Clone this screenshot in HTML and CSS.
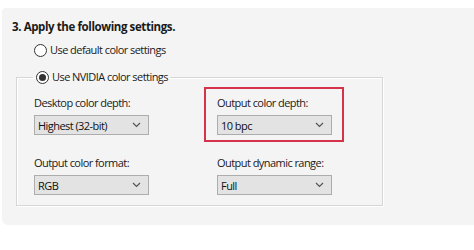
FILE: index.html
```html
<!DOCTYPE html>
<html lang="en">
<head>
<meta charset="UTF-8">
<meta name="viewport" content="width=device-width, initial-scale=1.0">
<title>Change resolution</title>
<link rel="stylesheet" href="styles.css">
</head>
<body>
<div class="panel">
  <div class="step-title">3. Apply the following settings.</div>

  <div class="radio-row">
    <span class="radio"></span>
    <span>Use default color settings</span>
  </div>

  <fieldset class="group">
    <legend class="radio-row">
      <span class="radio checked"></span>
      <span>Use NVIDIA color settings</span>
    </legend>

    <div class="grid">
      <div class="cell">
        <div class="label">Desktop color depth:</div>
        <div class="combo"><span>Highest (32-bit)</span><svg width="9" height="6" viewBox="0 0 9 6"><polyline points="1,1 4.5,4.5 8,1" fill="none" stroke="#555" stroke-width="1.2"/></svg></div>
      </div>
      <div class="cell highlight">
        <div class="label">Output color depth:</div>
        <div class="combo"><span>10 bpc</span><svg width="9" height="6" viewBox="0 0 9 6"><polyline points="1,1 4.5,4.5 8,1" fill="none" stroke="#555" stroke-width="1.2"/></svg></div>
      </div>
      <div class="cell">
        <div class="label">Output color format:</div>
        <div class="combo"><span>RGB</span><svg width="9" height="6" viewBox="0 0 9 6"><polyline points="1,1 4.5,4.5 8,1" fill="none" stroke="#555" stroke-width="1.2"/></svg></div>
      </div>
      <div class="cell">
        <div class="label">Output dynamic range:</div>
        <div class="combo"><span>Full</span><svg width="9" height="6" viewBox="0 0 9 6"><polyline points="1,1 4.5,4.5 8,1" fill="none" stroke="#555" stroke-width="1.2"/></svg></div>
      </div>
    </div>
  </fieldset>
</div>
</body>
</html>
```

FILE: styles.css
```css
body {
  margin: 0;
  background-color: #ffffff;
  font-family: "Open Sans", "Noto Sans", sans-serif;
  font-size: 11px;
  letter-spacing: -0.55px;
  color: #1a1a1a;
  white-space: nowrap;
}

.panel {
  margin: 8px 0 0 2px;
  height: 206px;
  padding: 11px 0 0 10px;
  background-color: #f4f4f4;
  border-top-left-radius: 4px;
  border-bottom-left-radius: 6px;
}

.step-title {
  font-weight: bold;
  font-size: 11.5px;
  letter-spacing: -0.4px;
  line-height: 16px;
}

.radio-row {
  display: flex;
  align-items: center;
  gap: 3px;
  line-height: 16px;
  height: 16px;
}

.panel > .radio-row {
  margin: 7px 0 0 22px;
}

.radio {
  width: 11px;
  height: 11px;
  border: 1px solid #333;
  border-radius: 50%;
  background-color: #fff;
  display: flex;
  justify-content: center;
  align-items: center;
}

.radio.checked::after {
  content: "";
  width: 7px;
  height: 7px;
  border-radius: 50%;
  background-color: #333;
}

.group {
  margin: 11px 0 0 4px;
  width: 367px;
  padding: 2px 0 3px 4px;
  border: 1px solid #d6d6d6;
  box-shadow: 1px 1px 0 #ffffff, inset 1px 1px 0 #ffffff;
  box-sizing: border-box;
  min-width: 0;
}

.group legend {
  margin-left: 12px;
  padding: 0 2px 0 3px;
}

.grid {
  display: grid;
  grid-template-columns: 170px 140px;
  column-gap: 13px;
  row-gap: 5px;
}

.cell {
  padding: 6px 10px 5px 11px;
  border: 2px solid transparent;
}

.cell.highlight {
  border-color: #d5334a;
}

.label {
  line-height: 15px;
  height: 15px;
}

.combo {
  margin-top: 5px;
  width: 115px;
  height: 20px;
  box-sizing: border-box;
  border: 1px solid #adadad;
  background-color: #e3e3e3;
  display: flex;
  align-items: center;
  justify-content: space-between;
  padding: 0 7px 0 3px;
  color: #111;
}
```
